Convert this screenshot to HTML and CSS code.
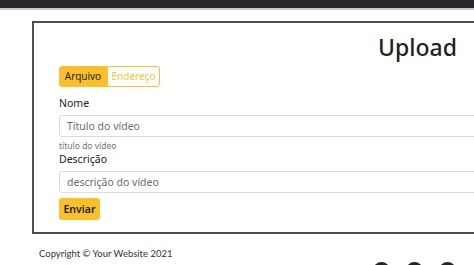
FILE: index.html
```html
<!DOCTYPE html>
<html lang="pt">
<head>
<meta charset="utf-8">
<title>Upload</title>
<link rel="stylesheet" href="styles.css">
</head>
<body>
<header class="topbar"></header>
<main class="page">
  <section class="card">
    <h1 class="title">Upload</h1>
    <div class="tabs">
      <button class="tab tab-active">Arquivo</button>
      <button class="tab">Endereço</button>
    </div>
    <form class="form">
      <label class="label">Nome</label>
      <input class="input" type="text" placeholder="Título do vídeo">
      <small class="help">título do vídeo</small>
      <label class="label label-2">Descrição</label>
      <input class="input" type="text" placeholder="descrição do vídeo">
      <button class="submit" type="button">Enviar</button>
    </form>
  </section>
</main>
<footer class="footer">
  <p class="copy">Copyright © Your Website 2021</p>
  <div class="social">
    <span class="dot"></span>
    <span class="dot"></span>
    <span class="dot"></span>
  </div>
</footer>
</body>
</html>
```

FILE: styles.css
```css
html, body {
  margin: 0;
  padding: 0;
  overflow: hidden;
  background: #fff;
  font-family: "Noto Sans", "Open Sans", sans-serif;
  color: #212529;
}
.topbar {
  height: 8px;
  background: #23272c;
  border-bottom: 2px solid #c9c9c9;
}
.page {
  padding: 11px 0 0 32px;
}
.card {
  width: 520px;
  border: 2px solid #4d4d4d;
  padding: 0 0 10px 25px;
  box-sizing: border-box;
  height: 213px;
}
.title {
  margin: 10px 0 0 319px;
  font-size: 23px;
  line-height: 28px;
  font-weight: 500;
  color: #222;
}
.tabs {
  display: flex;
  margin-top: 5px;
}
.tab {
  font-family: inherit;
  font-size: 10px;
  height: 21px;
  padding: 0;
  border: 1px solid #fbc02d;
  background: #fff;
  color: #f8c33a;
  line-height: 19px;
  text-align: center;
  cursor: pointer;
}
.tab:first-child {
  border-radius: 3px 0 0 3px;
  width: 48px;
}
.tab:last-child {
  border-radius: 0 3px 3px 0;
  width: 53px;
}
.tab-active {
  background: #fbbf2a;
  color: #1f1f1f;
}
.form {
  display: flex;
  flex-direction: column;
  align-items: flex-start;
}
.label {
  font-size: 10.5px;
  line-height: 14px;
  margin-top: 9px;
  color: #222;
}
.label-2 {
  margin-top: 0;
}
.input {
  margin-top: 5px;
  width: 440px;
  height: 22px;
  box-sizing: border-box;
  border: 1px solid #dcdcdc;
  border-radius: 3px;
  padding: 0 7px;
  font-family: inherit;
  font-size: 10.5px;
  color: #555;
}
.input::placeholder {
  color: #6c6c6c;
}
.help {
  font-size: 8.5px;
  line-height: 12px;
  margin-top: 3px;
  color: #6c757d;
}
.submit {
  margin-top: 5px;
  height: 22px;
  width: 41px;
  border: none;
  border-radius: 3px;
  background: #fbbf2a;
  color: #1f1f1f;
  font-family: inherit;
  font-size: 10.5px;
  font-weight: 600;
  padding: 0;
}
.footer {
  display: flex;
  justify-content: space-between;
  padding: 0 18px 0 39px;
  margin-top: 14px;
}
.copy {
  margin: 0;
  font-family: "Lato", "Open Sans", sans-serif;
  font-size: 9.5px;
  color: #333;
  line-height: 12px;
}
.social {
  display: flex;
  gap: 16px;
  margin-top: 14px;
}
.dot {
  width: 17px;
  height: 17px;
  border-radius: 50%;
  background: #212529;
}
```
